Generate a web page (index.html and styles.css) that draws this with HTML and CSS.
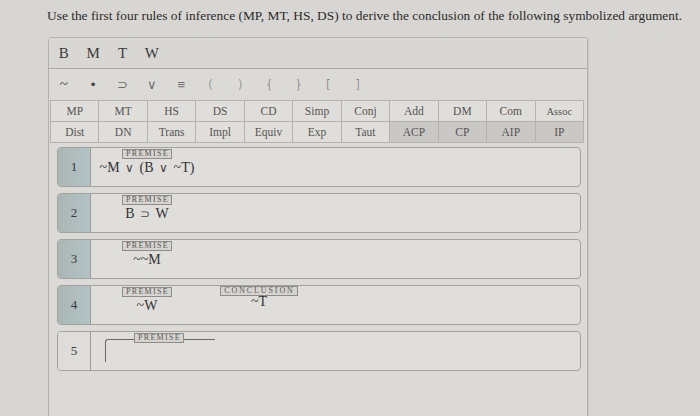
FILE: index.html
```html
<!DOCTYPE html>
<html>
<head>
<meta charset="utf-8">
<title>Derivation</title>
<link rel="stylesheet" href="styles.css">
</head>
<body>
<p class="prompt">Use the first four rules of inference (MP, MT, HS, DS) to derive the conclusion of the following symbolized argument.</p>
<div class="panel">
  <div class="vars"><span>B</span><span>M</span><span>T</span><span>W</span></div>
  <div class="symbols"><span class="tilde">~</span><span class="dot">•</span><span>⊃</span><span>∨</span><span>≡</span><span>(</span><span>)</span><span>{</span><span>}</span><span>[</span><span>]</span></div>
  <div class="rules">
    <div class="cell">MP</div><div class="cell">MT</div><div class="cell">HS</div><div class="cell">DS</div><div class="cell">CD</div><div class="cell">Simp</div><div class="cell">Conj</div><div class="cell">Add</div><div class="cell">DM</div><div class="cell">Com</div><div class="cell small">Assoc</div>
    <div class="cell">Dist</div><div class="cell">DN</div><div class="cell">Trans</div><div class="cell">Impl</div><div class="cell">Equiv</div><div class="cell">Exp</div><div class="cell">Taut</div><div class="cell dark">ACP</div><div class="cell dark">CP</div><div class="cell dark">AIP</div><div class="cell dark">IP</div>
  </div>
  <div class="lines">
    <div class="line">
      <div class="num">1</div>
      <div class="col"><span class="tag">PREMISE</span><span class="wff">~M <span class="op">∨</span> (B <span class="op">∨</span> ~T)</span></div>
    </div>
    <div class="line">
      <div class="num">2</div>
      <div class="col"><span class="tag">PREMISE</span><span class="wff">B <span class="op">⊃</span> W</span></div>
    </div>
    <div class="line">
      <div class="num">3</div>
      <div class="col"><span class="tag">PREMISE</span><span class="wff">~~M</span></div>
    </div>
    <div class="line">
      <div class="num">4</div>
      <div class="col"><span class="tag">PREMISE</span><span class="wff">~W</span></div>
      <div class="col concl"><span class="tag">CONCLUSION</span><span class="wff">~T</span></div>
    </div>
    <div class="line">
      <div class="num active">5</div>
      <div class="col entry"><span class="tag">PREMISE</span><span class="input"></span></div>
    </div>
  </div>
</div>
</body>
</html>
```
FILE: styles.css
```css
html, body {
  margin: 0;
  padding: 0;
}
body {
  width: 700px;
  height: 416px;
  overflow: hidden;
  background: #d8d6d3;
  font-family: "Liberation Serif", "Times New Roman", serif;
}
.prompt {
  margin: 0;
  padding: 8px 0 0 47px;
  font-size: 13.4px;
  line-height: 15px;
  color: #2b2a2a;
  white-space: nowrap;
}
.panel {
  margin: 14px 0 0 48px;
  width: 538px;
  height: 380px;
  border: 1px solid #b3b1ae;
  border-bottom: none;
  border-radius: 4px 4px 0 0;
  background: #dcdad6;
  box-shadow: 1px 0 0 #c9c7c4;
}
.vars {
  height: 30px;
  display: flex;
  align-items: center;
  border-bottom: 1px solid #aaa8a5;
  font-size: 15px;
  color: #3a3a3a;
  background: #d9d7d3;
}
.vars span, .symbols span {
  width: 29.4px;
  text-align: center;
}
.symbols {
  height: 31px;
  display: flex;
  align-items: center;
  font-family: "DejaVu Sans", sans-serif;
  font-weight: 200;
  font-size: 13px;
  color: #6f6d6b;
}
.symbols .tilde {
  font-family: "Liberation Serif", serif;
  font-weight: 400;
  font-size: 15px;
  color: #444;
}
.symbols .dot {
  color: #444;
  font-size: 13px;
  font-weight: 400;
}
.rules {
  margin-left: 1px;
  width: 533px;
  display: grid;
  grid-template-columns: repeat(11, 1fr);
  border-top: 1px solid #b4b2af;
  border-left: 1px solid #b4b2af;
  background: #e0deda;
}
.cell {
  height: 20px;
  display: flex;
  align-items: center;
  justify-content: center;
  border-right: 1px solid #b4b2af;
  border-bottom: 1px solid #b4b2af;
  font-size: 11.5px;
  color: #555351;
}
.cell.small {
  font-size: 10.5px;
}
.cell.dark {
  background: #cac8c5;
}
.lines {
  padding: 4px 0 0 8px;
  display: flex;
  flex-direction: column;
  gap: 6px;
}
.line {
  width: 522px;
  height: 38px;
  display: flex;
  border: 1px solid #a3a19e;
  border-radius: 4px;
  background: #e0deda;
  overflow: hidden;
}
.num {
  width: 32px;
  flex: none;
  display: flex;
  align-items: center;
  justify-content: center;
  border-right: 1px solid #9d9b98;
  background: linear-gradient(90deg, #a9b6b4, #b4c3c6);
  font-size: 13px;
  color: #3a3a3a;
}
.num.active {
  background: #dfddd9;
}
.col {
  width: 112px;
  flex: none;
  display: flex;
  flex-direction: column;
  align-items: center;
}
.tag {
  margin-top: 1px;
  padding: 0 2px 0 3px;
  border: 1px solid #8e8c89;
  background: #d6d4d0;
  font-size: 8px;
  line-height: 8px;
  letter-spacing: 1.3px;
  color: #5a5856;
  z-index: 1;
}
.wff {
  margin-top: 1px;
  font-size: 14px;
  line-height: 16px;
  color: #333;
  word-spacing: 2px;
}
.op {
  font-family: "DejaVu Sans", sans-serif;
  font-weight: 200;
  font-size: 12px;
  color: #444;
}
.concl .tag {
  margin-top: 0;
  letter-spacing: 1.9px;
}
.concl .wff {
  margin-top: 0;
  line-height: 12px;
}
.entry {
  align-items: flex-start;
  padding-left: 14px;
}
.entry .tag {
  margin-left: 29px;
}
.input {
  width: 109px;
  height: 22px;
  margin-top: -4px;
  border-left: 1px solid #6b6966;
  border-top: 1px solid #6b6966;
  border-top-left-radius: 3px;
}
```
